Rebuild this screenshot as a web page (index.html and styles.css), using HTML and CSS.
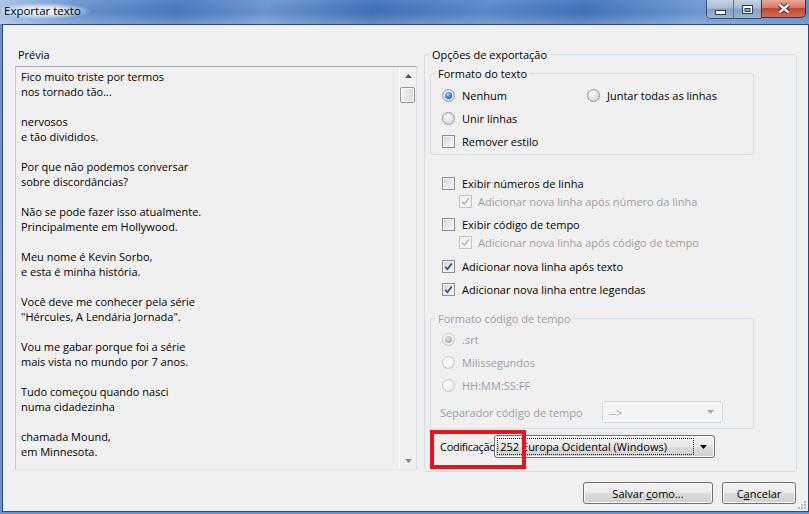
FILE: index.html
```html
<!DOCTYPE html>
<html lang="pt">
<head>
  <meta charset="UTF-8">
  <title>Exportar texto</title>
  <link rel="stylesheet" href="styles.css">
</head>
<body>
  <div class="window">
    <div class="titlebar">
      <span class="title">Exportar texto</span>
      <div class="caption-buttons">
        <div class="cap-group">
          <span class="cap-btn cap-min">
            <svg width="11" height="5" viewBox="0 0 11 5"><rect x="0.5" y="0.5" width="10" height="4" fill="#fff" stroke="#2a3f5e"/></svg>
          </span>
          <span class="cap-btn cap-max">
            <svg width="11" height="9" viewBox="0 0 11 9"><rect x="0.5" y="0.5" width="10" height="8" fill="#fff" stroke="#2a3f5e"/><rect x="3" y="3.5" width="5" height="3" fill="#8aa2c4" stroke="#2a3f5e"/></svg>
          </span>
        </div>
        <span class="cap-btn cap-close">
          <svg width="14" height="11" viewBox="0 0 14 11"><path d="M2.5 1.5l9 8M11.5 1.5l-9 8" stroke="#4a1c16" stroke-width="4.4"/><path d="M2.5 1.5l9 8M11.5 1.5l-9 8" stroke="#fff" stroke-width="2.4"/></svg>
        </span>
      </div>
    </div>

    <div class="client">
      <div class="main">
        <div class="preview">
          <div class="preview-label">Prévia</div>
          <div class="listbox">
            <div class="list-text">
              <p>Fico muito triste por termos<br>nos tornado tão...</p>
              <p>nervosos<br>e tão divididos.</p>
              <p>Por que não podemos conversar<br>sobre discordâncias?</p>
              <p>Não se pode fazer isso atualmente.<br>Principalmente em Hollywood.</p>
              <p>Meu nome é Kevin Sorbo,<br>e esta é minha história.</p>
              <p>Você deve me conhecer pela série<br>"Hércules, A Lendária Jornada".</p>
              <p>Vou me gabar porque foi a série<br>mais vista no mundo por 7 anos.</p>
              <p>Tudo começou quando nasci<br>numa cidadezinha</p>
              <p>chamada Mound,<br>em Minnesota.</p>
            </div>
            <div class="scrollbar">
              <div class="sb-arrow"><svg width="7" height="4" viewBox="0 0 7 4"><path d="M0 4h7L3.5 0z" fill="#555"/></svg></div>
              <div class="sb-thumb"></div>
              <div class="sb-track"></div>
              <div class="sb-arrow"><svg width="7" height="4" viewBox="0 0 7 4"><path d="M0 0h7L3.5 4z" fill="#888"/></svg></div>
            </div>
          </div>
        </div>

        <fieldset class="group options">
          <legend>Opções de exportação</legend>

          <fieldset class="group text-format">
            <legend>Formato do texto</legend>
            <div class="opt-grid">
              <div class="opt"><span class="radio checked"></span>Nenhum</div>
              <div class="opt"><span class="radio"></span>Juntar todas as linhas</div>
              <div class="opt"><span class="radio"></span>Unir linhas</div>
              <div></div>
              <div class="opt"><span class="check"></span>Remover estilo</div>
            </div>
          </fieldset>

          <div class="checks">
            <div class="row first"><span class="check"></span>Exibir números de linha</div>
            <div class="row sub disabled"><span class="check checked"></span>Adicionar nova linha após número da linha</div>
            <div class="row"><span class="check"></span>Exibir código de tempo</div>
            <div class="row sub disabled"><span class="check checked"></span>Adicionar nova linha após código de tempo</div>
            <div class="row spaced"><span class="check checked"></span>Adicionar nova linha após texto</div>
            <div class="row"><span class="check checked"></span>Adicionar nova linha entre legendas</div>
          </div>

          <fieldset class="group timecode disabled">
            <legend>Formato código de tempo</legend>
            <div class="opt-list">
              <div class="opt"><span class="radio checked"></span>.srt</div>
              <div class="opt"><span class="radio"></span>Milissegundos</div>
              <div class="opt"><span class="radio"></span>HH:MM:SS:FF</div>
            </div>
            <div class="separator">
              <span>Separador código de tempo</span>
              <div class="combo combo-off">
                <span>--&gt;</span>
                <svg width="7" height="4" viewBox="0 0 7 4"><path d="M0 0h7L3.5 4z" fill="#a8a8a8"/></svg>
              </div>
            </div>
          </fieldset>

          <div class="encoding">
            <span class="enc-label">Codificação</span>
            <div class="combo combo-on">
              <div class="enc-value"><span>1252 Europa Ocidental (Windows)</span></div>
              <svg width="7" height="4" viewBox="0 0 7 4"><path d="M0 0h7L3.5 4z" fill="#000"/></svg>
            </div>
          </div>
        </fieldset>
      </div>

      <div class="buttons">
        <button class="btn btn-save">Salvar <u>c</u>omo...</button>
        <button class="btn btn-cancel">C<u>a</u>ncelar</button>
      </div>

      <svg class="grip" width="10" height="10" viewBox="0 0 10 10">
        <g fill="#b8b8b8">
          <rect x="7" y="1" width="2" height="2"/>
          <rect x="4" y="4" width="2" height="2"/><rect x="7" y="4" width="2" height="2"/>
          <rect x="1" y="7" width="2" height="2"/><rect x="4" y="7" width="2" height="2"/><rect x="7" y="7" width="2" height="2"/>
        </g>
      </svg>
    </div>

    <div class="annotation"></div>
  </div>
</body>
</html>
```

FILE: styles.css
```css
* { box-sizing: border-box; }
body {
  margin: 0;
  font-family: "Open Sans", "Noto Sans", sans-serif;
  font-size: 11px;
  color: #000;
  background: #5f8bc9;
}
.window {
  position: relative;
  width: 809px;
  height: 514px;
  display: flex;
  flex-direction: column;
  padding: 0 0 2px 2px;
  background:
    linear-gradient(180deg, rgba(255,255,255,0.08) 0%, rgba(255,255,255,0) 50%, rgba(255,255,255,0.2) 100%) 0 0 / 100% 24px no-repeat,
    linear-gradient(100deg, #a9c2e6 0%, #6590cc 10%, #4676bd 22%, #6993cf 33%, #3e6eb6 46%, #5886c7 60%, #3f70b8 72%, #6a96d1 86%, #5887c9 100%) 0 0 / 100% 24px no-repeat,
    #6891cd;
}

/* title bar */
.titlebar {
  height: 24px;
  display: flex;
  align-items: flex-start;
}
.title {
  margin-top: 3px;
  padding: 0 10px 0 2px;
  line-height: 16px;
  font-size: 11.5px;
  background: radial-gradient(ellipse at 45% 50%, rgba(235,242,252,0.95) 30%, rgba(235,242,252,0) 72%);
}
.caption-buttons {
  margin-left: auto;
  margin-right: 3px;
  display: flex;
  height: 19px;
}
.cap-group {
  display: flex;
  border: 1px solid #36506f;
  border-top: none;
  border-right: none;
  border-radius: 0 0 0 5px;
  overflow: hidden;
}
.cap-btn {
  display: flex;
  align-items: center;
  justify-content: center;
  height: 18px;
}
.cap-min, .cap-max {
  width: 27px;
  background: linear-gradient(180deg, #c7d3e4 0%, #a9bbd4 45%, #86a0c3 50%, #9bb2d3 100%);
}
.cap-min { border-right: 1px solid #5a7393; padding-top: 6px; }
.cap-close {
  width: 45px;
  border: 1px solid #5a2a22;
  border-top: none;
  border-radius: 0 0 5px 0;
  background: linear-gradient(180deg, #e8a898 0%, #d6796a 45%, #c4462f 50%, #d46d52 100%);
}

/* client area */
.client {
  position: relative;
  flex: 1;
  display: flex;
  flex-direction: column;
  background: #f0f0f0;
  border: 1px solid #2f4b72;
  padding: 22px 11px 7px 12px;
}
.main {
  display: flex;
  gap: 7px;
  height: 425px;
}

/* preview */
.preview {
  width: 402px;
  display: flex;
  flex-direction: column;
}
.preview-label {
  line-height: 15px;
  padding-left: 3px;
  margin-bottom: 4px;
}
.listbox {
  height: 404px;
  display: flex;
  border: 1px solid;
  border-color: #abadb3 #dbdfe6 #e3e9ef #c4c6cb;
}
.list-text {
  flex: 1;
  padding: 2px 5px;
  line-height: 15px;
  overflow: hidden;
}
.list-text p { margin: 0 0 15px; }
.scrollbar {
  width: 17px;
  display: flex;
  flex-direction: column;
  border-left: 1px solid #fbfbfb;
}
.sb-arrow {
  height: 17px;
  display: flex;
  align-items: center;
  justify-content: center;
}
.sb-thumb {
  margin-top: 3px;
  width: 15px;
  height: 16px;
  border: 1px solid #979797;
  border-radius: 2px;
  background: linear-gradient(90deg, #f4f4f4 0%, #e6e6e6 50%, #d9d9d9 100%);
  box-shadow: inset 0 0 0 1px #fafafa;
}
.sb-track { flex: 1; }

/* group boxes */
.group {
  margin: 0;
  min-width: 0;
  border: 1px solid #d5dfe5;
  border-radius: 3px;
}
.group legend {
  padding: 0 2px;
  line-height: 15px;
}
.options {
  width: 373px;
  padding: 4px 5px 0 5px;
}
.text-format {
  width: 324px;
  padding: 3px 5px 1px 5px;
}
.opt-grid {
  display: grid;
  grid-template-columns: 145px auto;
  grid-auto-rows: 23px;
  margin-left: 6px;
}
.opt-list {
  display: grid;
  grid-auto-rows: 23px;
  margin-left: 6px;
}
.opt {
  display: flex;
  align-items: center;
  gap: 7px;
}

/* check rows */
.row {
  height: 16px;
  display: flex;
  align-items: center;
  gap: 7px;
  margin: 7px 0 0 12px;
}
.row.first { margin-top: 20px; }
.row.spaced { margin-top: 8px; }
.row.sub { margin: 2px 0 0 29px; gap: 6px; }
.disabled { color: #a0a0a0; }

/* radio and checkbox glyphs */
.radio {
  width: 13px;
  height: 13px;
  flex: none;
  border-radius: 50%;
  border: 1px solid #8f9aa6;
  background: radial-gradient(circle at 40% 35%, #fdfdfd 0%, #e6e6e6 45%, #c9ccd1 100%);
  display: flex;
  align-items: center;
  justify-content: center;
}
.radio.checked::after {
  content: "";
  width: 7px;
  height: 7px;
  border-radius: 50%;
  background: radial-gradient(circle at 40% 35%, #b6e2ff 0%, #3f8fd9 40%, #0f4596 100%);
}
.check {
  width: 13px;
  height: 13px;
  flex: none;
  border: 1px solid #8e8f8f;
  background: linear-gradient(135deg, #cfd2d6 0%, #eaeaea 55%, #f8f8f8 100%);
  box-shadow: inset 0 0 0 1px #f4f4f4;
  position: relative;
}
.check.checked::after {
  content: "";
  position: absolute;
  left: 1px;
  top: 1px;
  width: 9px;
  height: 9px;
  background: url("data:image/svg+xml;utf8,<svg xmlns='http://www.w3.org/2000/svg' width='9' height='9' viewBox='0 0 9 9'><path d='M1.2 4.8 L3.4 7.2 L7.8 1.4' fill='none' stroke='%23304a8c' stroke-width='1.7'/></svg>") no-repeat;
}
.disabled .check {
  border-color: #c5c5c5;
  background: linear-gradient(135deg, #f0f0f0, #f7f7f7);
}
.disabled .check.checked::after {
  background: url("data:image/svg+xml;utf8,<svg xmlns='http://www.w3.org/2000/svg' width='9' height='9' viewBox='0 0 9 9'><path d='M1.2 4.8 L3.4 7.2 L7.8 1.4' fill='none' stroke='%23b4b4b4' stroke-width='1.5'/></svg>") no-repeat;
}
.disabled .radio {
  border-color: #c8c8c8;
  background: radial-gradient(circle at 40% 35%, #fdfdfd 0%, #f1f1f1 60%, #e2e2e2 100%);
}
.disabled .radio.checked::after {
  background: radial-gradient(circle at 40% 35%, #e4e4e4 0%, #b5b5b5 60%, #9a9a9a 100%);
}

/* time code group */
.timecode {
  width: 324px;
  margin-top: 14px;
  padding: 2px 5px 5px 5px;
}
.separator {
  display: grid;
  grid-template-columns: 162px 121px;
  align-items: center;
  height: 22px;
  margin: 4px 0 0 4px;
}
.combo {
  height: 22px;
  display: flex;
  align-items: center;
  border-radius: 3px;
}
.combo-off {
  border: 1px solid #d9d9d9;
  background: #f4f4f4;
  padding: 0 8px 0 6px;
  justify-content: space-between;
}

/* encoding */
.encoding {
  display: flex;
  align-items: center;
  height: 23px;
  margin: 6px 0 0 10px;
}
.enc-label { width: 54px; white-space: nowrap; letter-spacing: -0.3px; }
.combo-on {
  width: 221px;
  height: 23px;
  border: 1px solid #707070;
  background: linear-gradient(180deg, #f2f2f2 0%, #ebebeb 50%, #dddddd 50%, #cfcfcf 100%);
  box-shadow: inset 0 0 0 1px #fbfbfb;
  padding: 2px 7px 2px 2px;
}
.enc-value {
  width: 199px;
  height: 17px;
  margin-right: 6px;
  border: 1px dotted #222;
  overflow: hidden;
  white-space: nowrap;
  line-height: 15px;
}
.enc-value span { margin-left: -4px; }

/* buttons */
.buttons {
  display: flex;
  justify-content: flex-end;
  gap: 9px;
  margin-top: 10px;
  padding-right: 1px;
}
.btn {
  height: 22px;
  border: 1px solid #707070;
  border-radius: 3px;
  background: linear-gradient(180deg, #f2f2f2 0%, #ebebeb 50%, #dddddd 50%, #cfcfcf 100%);
  box-shadow: inset 0 0 0 1px #fcfcfc;
  font: inherit;
  color: #000;
  padding: 0;
}
.btn-save { width: 130px; }
.btn-cancel { width: 74px; }

.grip {
  position: absolute;
  right: 1px;
  bottom: 1px;
}

/* red highlight drawn over the dialog */
.annotation {
  position: absolute;
  left: 430px;
  top: 430px;
  width: 96px;
  height: 39px;
  border: 4px solid #e8141c;
}
```
